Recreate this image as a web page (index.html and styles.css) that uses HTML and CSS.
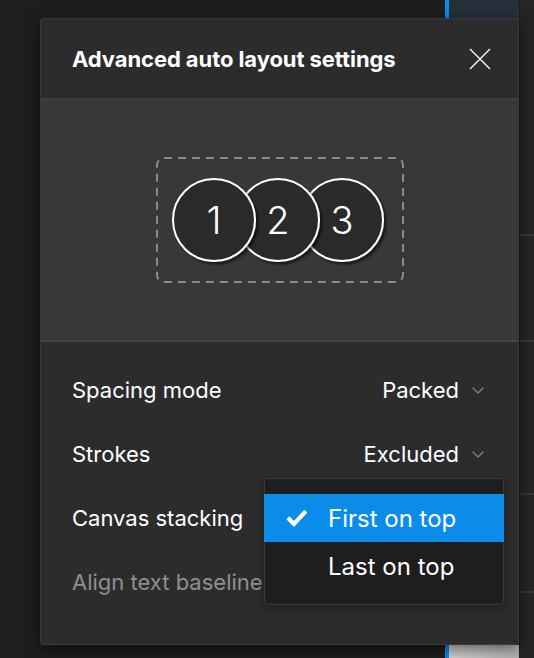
FILE: index.html
```html
<!DOCTYPE html>
<html lang="en">
<head>
<meta charset="utf-8">
<title>Advanced auto layout settings</title>
<link rel="stylesheet" href="styles.css">
</head>
<body>
<div class="app">
  <div class="canvas"></div>
  <div class="side">
    <div class="side-main">
      <div class="side-top"></div>
      <div class="side-mid"></div>
      <div class="side-bottom"></div>
    </div>
    <div class="side-edge">
      <div class="edge-cell edge-a"></div>
      <div class="edge-cell edge-b"></div>
      <div class="edge-cell edge-c"></div>
      <div class="edge-cell edge-d"></div>
      <div class="edge-rest"></div>
    </div>
  </div>

  <section class="dialog">
    <header class="dlg-head">
      <h1 class="dlg-title">Advanced auto layout settings</h1>
      <button class="close" aria-label="Close">
        <svg width="22" height="22" viewBox="0 0 22 22"><path d="M1 1 L21 21 M21 1 L1 21" stroke="#e6e6e6" stroke-width="1.6" fill="none"/></svg>
      </button>
    </header>

    <div class="preview">
      <svg class="stack" width="250" height="130" viewBox="0 0 250 130">
        <defs>
          <filter id="sh" x="-20%" y="-20%" width="150%" height="150%">
            <feDropShadow dx="2.5" dy="2.5" stdDeviation="1.2" flood-color="#000" flood-opacity="0.55"/>
          </filter>
        </defs>
        <rect x="2" y="3" width="246" height="124" rx="7" fill="none" stroke="#8a8a8a" stroke-width="2" stroke-dasharray="8 6"/>
        <g filter="url(#sh)"><circle cx="187" cy="65" r="41" fill="#2c2c2c" stroke="#fff" stroke-width="2"/></g>
        <text class="num" x="187" y="79" text-anchor="middle">3</text>
        <g filter="url(#sh)"><circle cx="123" cy="65" r="41" fill="#2c2c2c" stroke="#fff" stroke-width="2"/></g>
        <text class="num" x="123" y="79" text-anchor="middle">2</text>
        <g filter="url(#sh)"><circle cx="59" cy="65" r="41" fill="#2c2c2c" stroke="#fff" stroke-width="2"/></g>
        <text class="num" x="59" y="79" text-anchor="middle">1</text>
      </svg>
    </div>

    <div class="dlg-body">
      <div class="row">
        <span class="label">Spacing mode</span>
        <span class="value">Packed<svg class="chev" width="12" height="7" viewBox="0 0 12 7"><path d="M0.7 0.7 L6 6 L11.3 0.7" stroke="#7a7a7a" stroke-width="1.4" fill="none"/></svg></span>
      </div>
      <div class="row">
        <span class="label">Strokes</span>
        <span class="value">Excluded<svg class="chev" width="12" height="7" viewBox="0 0 12 7"><path d="M0.7 0.7 L6 6 L11.3 0.7" stroke="#7a7a7a" stroke-width="1.4" fill="none"/></svg></span>
      </div>
      <div class="row">
        <span class="label">Canvas stacking</span>
      </div>
      <div class="row">
        <span class="label label-off">Align text baseline</span>
      </div>
    </div>

    <ul class="menu">
      <li class="item item-on">
        <svg class="check" width="22" height="18" viewBox="0 0 22 18"><path d="M1.8 8.8 L8 15 L19.8 2.2" stroke="#fff" stroke-width="4.2" fill="none"/></svg>
        <span>First on top</span>
      </li>
      <li class="item"><span>Last on top</span></li>
    </ul>
  </section>
</div>
</body>
</html>
```

FILE: styles.css
```css
* { box-sizing: border-box; }

html, body {
  margin: 0;
  padding: 0;
  background: #1e1e1e;
}

body {
  font-family: Inter, "Noto Sans", "Liberation Sans", sans-serif;
  color: #fff;
}

.app {
  position: relative;
  display: flex;
  width: 534px;
  height: 658px;
  overflow: hidden;
}

.canvas {
  flex: 1;
  background: #1e1e1e;
}

.side {
  width: 89px;
  display: flex;
}

.side-main {
  width: 74px;
  display: flex;
  flex-direction: column;
  border-left: 4px solid #0d8ce9;
}

.side-top {
  height: 18px;
  background: #26303a;
}

.side-mid {
  flex: 1;
  background: #2c2c2c;
}

.side-bottom {
  height: 13px;
  background: linear-gradient(90deg, #d4d4d4, #b4b4b4);
}

.side-edge {
  flex: 1;
  display: flex;
  flex-direction: column;
  background: #252525;
  border-left: 1px solid #1c1c1c;
}

.edge-cell { border-bottom: 2px solid #363636; }
.edge-a { height: 236px; }
.edge-b { height: 106px; }
.edge-c { height: 153px; }
.edge-d { height: 98px; }
.edge-rest { flex: 1; }

.dialog {
  position: absolute;
  left: 40px;
  top: 18px;
  width: 479px;
  height: 627px;
  display: flex;
  flex-direction: column;
  background: #2c2c2c;
  border: 1px solid #3a3a3a;
  border-radius: 3px;
  box-shadow: 0 4px 16px rgba(0, 0, 0, 0.55);
}

.dlg-head {
  height: 81px;
  flex: none;
  display: flex;
  align-items: center;
  justify-content: space-between;
  padding: 0 27px 0 31px;
  border-bottom: 2px solid #3e3e3e;
}

.dlg-title {
  margin: 0;
  font-size: 22px;
  font-weight: 700;
  color: #fff;
  letter-spacing: -0.08px;
}

.close {
  display: flex;
  padding: 0;
  border: 0;
  background: none;
}

.preview {
  height: 242px;
  flex: none;
  display: flex;
  align-items: center;
  justify-content: center;
  background: #383838;
  border-bottom: 2px solid #444;
}

.stack .num {
  font-family: Inter, "Noto Sans", sans-serif;
  font-size: 38px;
  font-weight: 300;
  fill: #fff;
}

.dlg-body {
  flex: 1;
  padding: 16px 34px 0 31px;
}

.row {
  height: 64px;
  display: flex;
  align-items: center;
  justify-content: space-between;
  font-size: 22px;
}

.label { color: #fff; }
.label-off { color: #8f8f8f; }

.value {
  display: flex;
  align-items: center;
  color: #fff;
}

.chev { margin-left: 13px; }

.menu {
  position: absolute;
  left: 223px;
  top: 459px;
  width: 240px;
  height: 127px;
  margin: 0;
  padding: 15px 0;
  list-style: none;
  background: #1e1e1e;
  border: 1px solid #393939;
  border-radius: 4px;
  box-shadow: 0 3px 10px rgba(0, 0, 0, 0.35);
}

.item {
  height: 48px;
  display: flex;
  align-items: center;
  padding-left: 63px;
  position: relative;
  font-size: 24px;
  color: #fff;
}

.item-on {
  background: #0c8ce9;
  margin: 0 -1px;
  padding-left: 64px;
}

.check {
  position: absolute;
  left: 22px;
  top: 15px;
}
```
